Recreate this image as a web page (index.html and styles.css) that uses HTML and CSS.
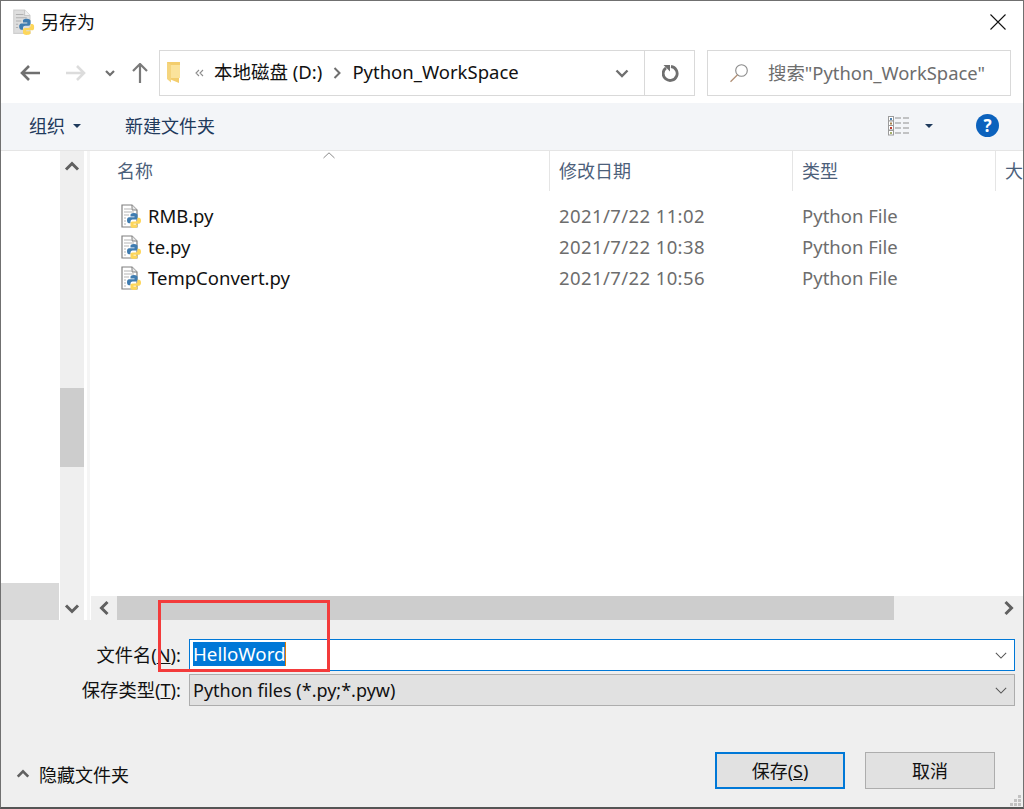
FILE: index.html
```html
<!DOCTYPE html>
<html lang="zh-CN">
<head>
<meta charset="utf-8">
<title>另存为</title>
<link rel="stylesheet" href="styles.css">
</head>
<body>
<svg class="defs" width="0" height="0" aria-hidden="true">
  <defs>
    <symbol id="snake" viewBox="0 0 20 24">
      <path d="M13 9C10 9 9.500 10 9.500 11V12.500H13.500V13.300H8C6.800 13.300 6 14.500 6 16.200C6 18 6.800 19.200 8 19.200H9.500V17.500C9.500 16.300 10.500 15.500 11.500 15.500H14.500C15.800 15.500 16.500 14.700 16.500 13.700V11C16.500 10 15.500 9 13 9Z" fill="#3f7cb0"/>
      <path d="M13 9C10 9 9.500 10 9.500 11V12.500H13.500V13.300H8C6.800 13.300 6 14.500 6 16.200C6 18 6.800 19.200 8 19.200H9.500V17.500C9.500 16.300 10.500 15.500 11.500 15.500H14.500C15.800 15.500 16.500 14.700 16.500 13.700V11C16.500 10 15.500 9 13 9Z" fill="#fdd65a" transform="rotate(180 13 16.500)"/>
    </symbol>
    <symbol id="py" viewBox="0 0 20 24">
      <path d="M1 1H11L16 6V23H1Z" fill="#fff" stroke="#808080" stroke-width="1.200"/>
      <path d="M11 1V6H16" fill="#e8e8e8" stroke="#808080"/>
      <path d="M3 5H10M3 8H13M3 11H8M3 14H5M3 17H5M3 20H5" stroke="#b5b5b5"/>
      <use href="#snake" width="20" height="24"/>
    </symbol>
    <symbol id="py-app" viewBox="0 0 20 24">
      <path d="M1 1H11L16 6V22.500H1Z" fill="#dedede" stroke="#cfcfcf"/>
      <path d="M11 1V6H16" fill="#f2f2f2" stroke="#c8c8c8"/>
      <path d="M3 5H10M3 8H13M3 11H8M3 14H5M3 17H5" stroke="#b0b0b0"/>
      <use href="#snake" width="20" height="24"/>
    </symbol>
    <symbol id="chev-up" viewBox="0 0 16 10">
      <path d="M2 8.500L8 2.500L14 8.500" fill="none" stroke="currentColor" stroke-width="3"/>
    </symbol>
    <symbol id="chev-thin" viewBox="0 0 14 8">
      <path d="M1 1L7 7L13 1" fill="none" stroke="currentColor" stroke-width="1.200"/>
    </symbol>
  </defs>
</svg>

<div class="window">
  <header class="titlebar">
    <svg class="title-icon" width="23" height="26"><use href="#py-app"/></svg>
    <span class="title-text">另存为</span>
    <svg class="close" width="16" height="16" viewBox="0 0 16 16"><path d="M0.500 0.500L15.500 15.500M15.500 0.500L0.500 15.500" stroke="#111" stroke-width="1.100"/></svg>
  </header>

  <nav class="navbar">
    <svg class="nav-back" width="20" height="16" viewBox="0 0 20 16"><path d="M9 1L2 8L9 15M2 8H20" fill="none" stroke="#6f6f6f" stroke-width="2.600"/></svg>
    <svg class="nav-forward" width="20" height="16" viewBox="0 0 20 16"><path d="M11 1L18 8L11 15M18 8H0" fill="none" stroke="#dcdcdc" stroke-width="2.600"/></svg>
    <svg class="nav-drop" width="10" height="7" viewBox="0 0 10 7"><path d="M1 1L5 5L9 1" fill="none" stroke="#6f6f6f" stroke-width="2.200"/></svg>
    <svg class="nav-up" width="16" height="20" viewBox="0 0 16 20"><path d="M1 8L8 1L15 8M8 1V20" fill="none" stroke="#7a7a7a" stroke-width="2.200"/></svg>

    <div class="address">
      <svg class="folder" width="15" height="22" viewBox="0 0 15 22">
        <path d="M1 0H14V15H13V21L1 16Z" fill="#f3cd6d"/>
        <path d="M5 3L14 3V16H5Z" fill="#fbe39b"/>
        <path d="M1 0L5 3V20.500L1 17Z" fill="#f5d57e"/>
      </svg>
      <svg class="crumb-more" width="9" height="8" viewBox="0 0 9 8"><path d="M4 1L1 4L4 7M8 1L5 4L8 7" fill="none" stroke="#8c8c8c" stroke-width="1.100"/></svg>
      <span class="crumb">本地磁盘 (D:)</span>
      <svg class="crumb-sep" width="8" height="12" viewBox="0 0 8 12"><path d="M1.500 1L6.500 6L1.500 11" fill="none" stroke="#6f6f6f" stroke-width="2"/></svg>
      <span class="crumb">Python_WorkSpace</span>
      <svg class="addr-drop" width="14" height="9" viewBox="0 0 14 9"><path d="M1.500 1.500L7 7L12.500 1.500" fill="none" stroke="#6f6f6f" stroke-width="2.400"/></svg>
      <div class="refresh">
        <svg width="18" height="18" viewBox="0 0 18 18"><path d="M4 3.800A7 7 0 1 0 9 2.500" fill="none" stroke="#6f6f6f" stroke-width="2.800"/><path d="M1.500 1H8V7.500Z" fill="#6f6f6f"/></svg>
      </div>
    </div>

    <div class="search">
      <svg width="20" height="20" viewBox="0 0 20 20"><circle cx="12.500" cy="7.500" r="5.800" fill="none" stroke="#8a8a8a" stroke-width="1.100"/><path d="M8.500 11.700L1.500 18.700" stroke="#b08e74" stroke-width="1.300"/></svg>
      <span class="search-text">搜索"Python_WorkSpace"</span>
    </div>
  </nav>

  <div class="toolbar">
    <span class="tool-btn">组织</span>
    <span class="caret"></span>
    <span class="tool-btn tool-new">新建文件夹</span>
    <svg class="view-icon" width="22" height="20" viewBox="0 0 22 20">
      <g fill="#fff" stroke="#9b9b9b"><rect x="0.500" y="0.500" width="5" height="4.500"/><rect x="0.500" y="5" width="5" height="4.500"/><rect x="0.500" y="9.500" width="5" height="4.500"/><rect x="0.500" y="14.500" width="5" height="4.500"/></g>
      <rect x="2" y="2" width="2" height="2" fill="#4f83b0"/><rect x="2" y="6.500" width="2" height="2" fill="#a5814b"/><rect x="2" y="11" width="2" height="2" fill="#c0392b"/><rect x="2" y="16" width="2" height="2" fill="#a5b06a"/>
      <path d="M7 2H13M15 2H21M7 7H13M15 7H21M7 12H13M15 12H21M7 17H13M15 17H21" stroke="#8f8f8f"/>
    </svg>
    <span class="caret caret-view"></span>
    <span class="help">?</span>
  </div>

  <main class="content">
    <aside class="sidebar">
      <div class="tree">
        <div class="tree-selected"></div>
      </div>
      <div class="vscroll">
        <svg class="sb-arrow" width="16" height="10"><use href="#chev-up"/></svg>
        <div class="vthumb"></div>
        <svg class="sb-arrow sb-arrow-down" width="16" height="10"><use href="#chev-up"/></svg>
      </div>
      <div class="splitter"></div>
    </aside>

    <section class="files">
      <div class="cols col-head">
        <div class="head-cell head-name">名称
          <svg class="sort" width="12" height="7" viewBox="0 0 12 7"><path d="M0.500 6L6 0.800L11.500 6" fill="none" stroke="#8a8a8a"/></svg>
        </div>
        <div class="head-cell">修改日期</div>
        <div class="head-cell">类型</div>
        <div class="head-cell">大小</div>
      </div>
      <div class="rows">
        <div class="cols row">
          <div class="cell-name"><svg class="file-icon" width="20" height="24"><use href="#py"/></svg>RMB.py</div>
          <div class="cell-meta cell-date">2021/7/22 11:02</div>
          <div class="cell-meta">Python File</div>
        </div>
        <div class="cols row">
          <div class="cell-name"><svg class="file-icon" width="20" height="24"><use href="#py"/></svg>te.py</div>
          <div class="cell-meta cell-date">2021/7/22 10:38</div>
          <div class="cell-meta">Python File</div>
        </div>
        <div class="cols row">
          <div class="cell-name"><svg class="file-icon" width="20" height="24"><use href="#py"/></svg>TempConvert.py</div>
          <div class="cell-meta cell-date">2021/7/22 10:56</div>
          <div class="cell-meta">Python File</div>
        </div>
      </div>
      <div class="hscroll">
        <svg class="h-arrow" width="10" height="16" viewBox="0 0 10 16"><path d="M8.500 2L2.500 8L8.500 14" fill="none" stroke="#606060" stroke-width="3"/></svg>
        <div class="hthumb"></div>
        <svg class="h-arrow h-arrow-right" width="10" height="16" viewBox="0 0 10 16"><path d="M1.500 2L7.500 8L1.500 14" fill="none" stroke="#606060" stroke-width="3"/></svg>
      </div>
    </section>
  </main>

  <footer class="form">
    <div class="field-grid">
      <label class="field-label">文件名(<u>N</u>):</label>
      <div class="input">
        <span class="selection">HelloWord</span>
        <svg class="combo-chev" width="12" height="7"><use href="#chev-thin"/></svg>
      </div>
      <label class="field-label">保存类型(<u>T</u>):</label>
      <div class="input input-select">
        <span>Python files (*.py;*.pyw)</span>
        <svg class="combo-chev" width="12" height="7"><use href="#chev-thin"/></svg>
      </div>
    </div>
    <div class="actions">
      <svg class="hide-chev" width="14" height="9"><use href="#chev-up"/></svg>
      <span class="hide-text">隐藏文件夹</span>
      <button class="btn btn-primary">保存(<u>S</u>)</button>
      <button class="btn">取消</button>
    </div>
    <div class="grip"><i></i><i></i><i></i><i></i><i></i><i></i></div>
  </footer>

  <div class="annotation"></div>
</div>
</body>
</html>
```

FILE: styles.css
```css
* { box-sizing: border-box; }
html, body { margin: 0; padding: 0; }
body {
  width: 1024px;
  height: 809px;
  overflow: hidden;
  font-family: "Noto Sans", "Noto Sans CJK SC", sans-serif;
  font-size: 18px;
  color: #111;
}
.defs { position: absolute; }
svg { display: block; flex: none; }

.window {
  position: relative;
  width: 1024px;
  height: 809px;
  display: flex;
  flex-direction: column;
  background: #fff;
  border: 1px solid #707070;
  border-bottom-width: 2px;
  border-bottom-color: #555;
}

/* title bar */
.titlebar {
  height: 34px;
  flex: none;
  display: flex;
  align-items: center;
  padding: 8px 0 0 11px;
}
.title-text { margin-left: 6px; line-height: 24px; font-size: 18px; }
.close { margin-left: auto; margin-right: 17px; }

/* nav */
.navbar {
  height: 68px;
  flex: none;
  display: flex;
  align-items: flex-start;
  padding-top: 15px;
}
.nav-back { margin: 15px 0 0 19px; }
.nav-forward { margin: 15px 0 0 26px; }
.nav-drop { margin: 20px 0 0 19px; }
.nav-up { margin: 13px 0 0 17px; }
.address {
  width: 536px;
  height: 46px;
  margin-left: 11px;
  display: flex;
  align-items: center;
  border: 1px solid #d9d9d9;
  padding-left: 6px;
}
.folder { margin-right: 14px; }
.crumb-more { margin-right: 10px; }
.crumb { font-size: 18.500px; line-height: 24px; white-space: nowrap; margin-bottom: 2px; }
.crumb-sep { margin: 0 11px; }
.addr-drop { margin-left: auto; margin-right: 15px; }
.refresh {
  width: 50px;
  height: 100%;
  border-left: 1px solid #d9d9d9;
  padding-left: 3px;
  display: flex;
  align-items: center;
  justify-content: center;
}
.search {
  width: 304px;
  height: 46px;
  margin-left: 12px;
  display: flex;
  align-items: center;
  border: 1px solid #d9d9d9;
  padding-left: 21px;
}
.search-text { font-size: 18.400px; margin: 0 0 2px 19px; color: #6d6d6d; white-space: nowrap; }

/* toolbar */
.toolbar {
  height: 47px;
  flex: none;
  display: flex;
  align-items: center;
  background: #f3f5f8;
  padding: 0 0 2px 28px;
}
.tool-btn { color: #1f3a5c; white-space: nowrap; margin-bottom: 2px; }
.caret {
  width: 0;
  height: 0;
  margin-left: 8px;
  border: 4px solid transparent;
  border-top-color: #1f3a5c;
  border-bottom: 0;
}
.tool-new { margin-left: 44px; }
.view-icon { margin-left: auto; }
.caret-view { margin-left: 15px; }
.help {
  width: 23px;
  height: 23px;
  margin: 0 24px 0 43px;
  border-radius: 50%;
  background: #0c62bd;
  color: #fff;
  font-size: 17px;
  font-weight: 700;
  line-height: 23px;
  text-align: center;
}

/* content */
.content {
  flex: 1;
  min-height: 0;
  display: flex;
  border-top: 1px solid #e5e5e5;
}
.sidebar { width: 89px; flex: none; display: flex; }
.tree {
  width: 59px;
  display: flex;
  flex-direction: column;
  justify-content: flex-end;
  border-right: 1px solid #fff;
}
.tree-selected { height: 37px; background: #d9d9d9; }
.vscroll {
  width: 24px;
  background: #efefef;
  display: flex;
  flex-direction: column;
  align-items: center;
  color: #606060;
}
.sb-arrow { margin-top: 10px; }
.vthumb { width: 100%; height: 79px; margin-top: 217px; background: #cdcdcd; }
.sb-arrow-down { margin-top: auto; margin-bottom: 6px; transform: rotate(180deg); }
.splitter {
  width: 6px;
  border-left: 3px solid #fff;
  background: #f5f5f5;
}

.files {
  flex: 1;
  min-width: 0;
  display: flex;
  flex-direction: column;
  overflow: hidden;
}
.cols {
  display: grid;
  grid-template-columns: 459px 243px 203px 60px;
}
.col-head { height: 40px; flex: none; color: #4c607a; }
.head-cell {
  position: relative;
  display: flex;
  align-items: center;
  padding-left: 9px;
  border-left: 1px solid #e5e5e5;
  white-space: nowrap;
  overflow: hidden;
  line-height: 24px;
}
.head-name { padding-left: 27px; border-left: 0; overflow: visible; }
.sort { position: absolute; left: 233px; top: 1px; }

.rows { flex: 1; padding-top: 9px; }
.row { height: 31px; align-items: center; line-height: 24px; font-size: 18.500px; }
.cell-name { display: flex; align-items: center; padding-left: 31px; color: #111; }
.file-icon { margin-right: 7px; }
.cell-meta { padding-left: 10px; color: #6d6d6d; white-space: nowrap; }
.cell-date { letter-spacing: .4px; }

.hscroll {
  height: 24px;
  flex: none;
  margin-left: 1px;
  display: flex;
  align-items: center;
  background: #efefef;
}
.h-arrow { margin-left: 8px; margin-right: 8px; }
.hthumb { width: 777px; height: 100%; background: #cdcdcd; }
.h-arrow-right { margin-left: auto; margin-right: 9px; }

/* form */
.form {
  position: relative;
  height: 187px;
  flex: none;
  background: #efefef;
  padding-top: 19px;
}
.field-grid {
  display: grid;
  grid-template-columns: 180px 826px;
  column-gap: 8px;
  row-gap: 3px;
}
.field-label { font-size: 18.300px; text-align: right; align-self: center; line-height: 24px; white-space: nowrap; }
.input {
  height: 32px;
  display: flex;
  align-items: center;
  border: 1px solid #0078d7;
  background: #fff;
  padding-left: 3px;
  line-height: 24px;
}
.input-select { border-color: #adadad; background: #e1e1e1; }
.selection {
  font-size: 18.700px;
  background: #0078d7;
  color: #fff;
  border-right: 1px solid #e07b00;
  height: 24px;
  margin-bottom: 2px;
}
.combo-chev { margin-left: auto; margin-right: 7px; color: #555; }

.actions {
  display: flex;
  align-items: center;
  margin-top: 46px;
  padding-left: 15px;
}
.hide-chev { color: #606060; margin-top: 6px; }
.hide-text { margin-left: 9px; margin-top: 8px; line-height: 24px; }
.btn {
  width: 130px;
  height: 37px;
  border: 1px solid #adadad;
  background: #e1e1e1;
  font: inherit;
  color: #111;
  padding: 0 0 2px;
  margin-right: 28px;
}
.btn-primary { margin-left: auto; margin-right: 20px; border: 2px solid #0078d7; }

.grip {
  position: absolute;
  right: 1px;
  bottom: 0;
  width: 12px;
  height: 12px;
  display: grid;
  grid-template-columns: repeat(3, 3px);
  grid-template-rows: repeat(3, 3px);
  gap: 1px;
}
.grip i { background: #c2c2c2; }
.grip i:nth-child(1) { grid-area: 1 / 3; }
.grip i:nth-child(2) { grid-area: 2 / 2; }
.grip i:nth-child(3) { grid-area: 2 / 3; }
.grip i:nth-child(4) { grid-area: 3 / 1; }
.grip i:nth-child(5) { grid-area: 3 / 2; }
.grip i:nth-child(6) { grid-area: 3 / 3; }

/* red annotation over the dialog */
.annotation {
  position: absolute;
  left: 157px;
  top: 599px;
  width: 172px;
  height: 72px;
  border: 3px solid #f33b3b;
}
```
